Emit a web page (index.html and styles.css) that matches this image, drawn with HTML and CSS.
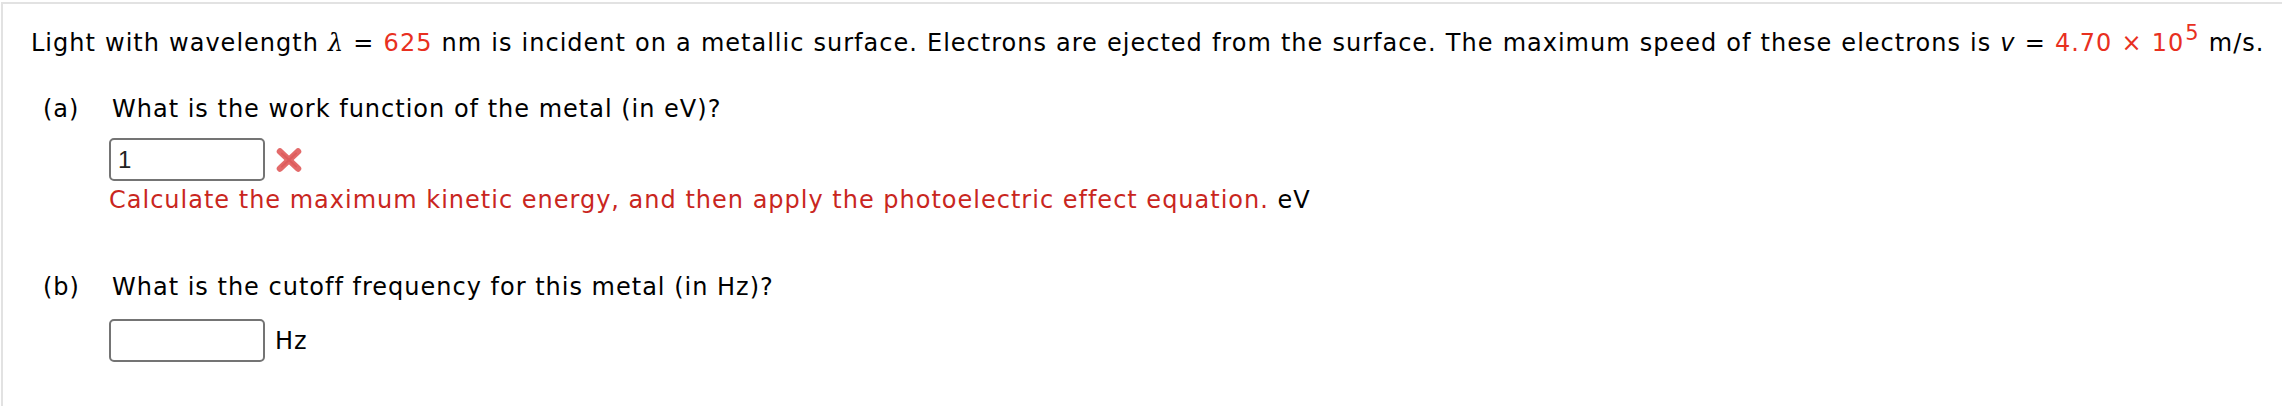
FILE: index.html
```html
<!DOCTYPE html>
<html>
<head>
<meta charset="utf-8">
<link rel="stylesheet" href="styles.css">
</head>
<body>
<div class="page">
  <p class="intro">Light with wavelength <span class="sym">λ</span> = <span class="val">625</span> nm is incident on a metallic surface. Electrons are ejected from the surface. The maximum speed of these electrons is <span class="var">v</span> = <span class="val">4.70 × 10<sup class="sup">5</sup></span> m/s.</p>

  <div class="part part-a">
    <div class="label">(a)</div>
    <div class="body">
      <div class="question">What is the work function of the metal (in eV)?</div>
      <div class="answer">
        <div class="box"><span class="entry">1</span></div>
        <svg class="wrong" width="28" height="26" viewBox="0 0 28 26" aria-hidden="true">
          <g stroke="#e36a6a" stroke-width="6.5" stroke-linecap="round">
            <line x1="5" y1="4.5" x2="23" y2="21.5"/>
            <line x1="23" y1="4.5" x2="5" y2="21.5"/>
          </g>
          <g stroke="#d95050" stroke-width="2" stroke-linecap="round" opacity="0.5">
            <line x1="7" y1="6.5" x2="21" y2="19.5"/>
            <line x1="21" y1="6.5" x2="7" y2="19.5"/>
          </g>
        </svg>
      </div>
      <div class="feedback"><span class="hint">Calculate the maximum kinetic energy, and then apply the photoelectric effect equation.</span> eV</div>
    </div>
  </div>

  <div class="part part-b">
    <div class="label">(b)</div>
    <div class="body">
      <div class="question">What is the cutoff frequency for this metal (in Hz)?</div>
      <div class="answer">
        <div class="box"></div>
        <span class="unit">Hz</span>
      </div>
    </div>
  </div>
</div>
</body>
</html>
```

FILE: styles.css
```css
html, body {
  margin: 0;
  padding: 0;
  background: #ffffff;
}

body {
  font-family: "DejaVu Sans", Verdana, sans-serif;
  font-size: 24px;
  line-height: 36px;
  letter-spacing: 1px;
  color: #000000;
}

.page {
  margin: 2px 0 0 1px;
  border-top: 2px solid #e2e2e2;
  border-left: 2px solid #e2e2e2;
  height: 404px;
  box-sizing: border-box;
  padding-top: 21px;
}

.intro {
  margin: 0;
  padding-left: 28px;
  white-space: nowrap;
  word-spacing: 0.5px;
}

.sym {
  font-family: "DejaVu Serif", "Liberation Serif", serif;
  font-style: italic;
}

.var {
  font-style: italic;
}

.val {
  color: #e8301f;
}

.sup {
  font-size: 21px;
  line-height: 0;
  vertical-align: 11px;
  margin-left: 1px;
}

.part {
  display: flex;
  padding-left: 40px;
}

.part-a {
  margin-top: 30px;
}

.part-b {
  margin-top: 51px;
}

.label {
  width: 66px;
  flex: none;
}

.question {
  padding-left: 3px;
}

.answer {
  display: flex;
  align-items: center;
  gap: 10px;
  margin-top: 11px;
}

.part-b .answer {
  margin-top: 14px;
}

.box {
  width: 156px;
  height: 43px;
  box-sizing: border-box;
  border: 2px solid #747474;
  border-radius: 5px;
  padding-left: 7px;
  display: flex;
  align-items: center;
  background: #ffffff;
}

.entry {
  font-family: "Liberation Sans", Arial, sans-serif;
  font-size: 24px;
  letter-spacing: 0;
  color: #222222;
}

.wrong {
  display: block;
  flex: none;
}

.feedback {
  white-space: nowrap;
  margin-top: 1px;
}

.hint {
  color: #c9261e;
}

.unit {
  line-height: 36px;
}
```
